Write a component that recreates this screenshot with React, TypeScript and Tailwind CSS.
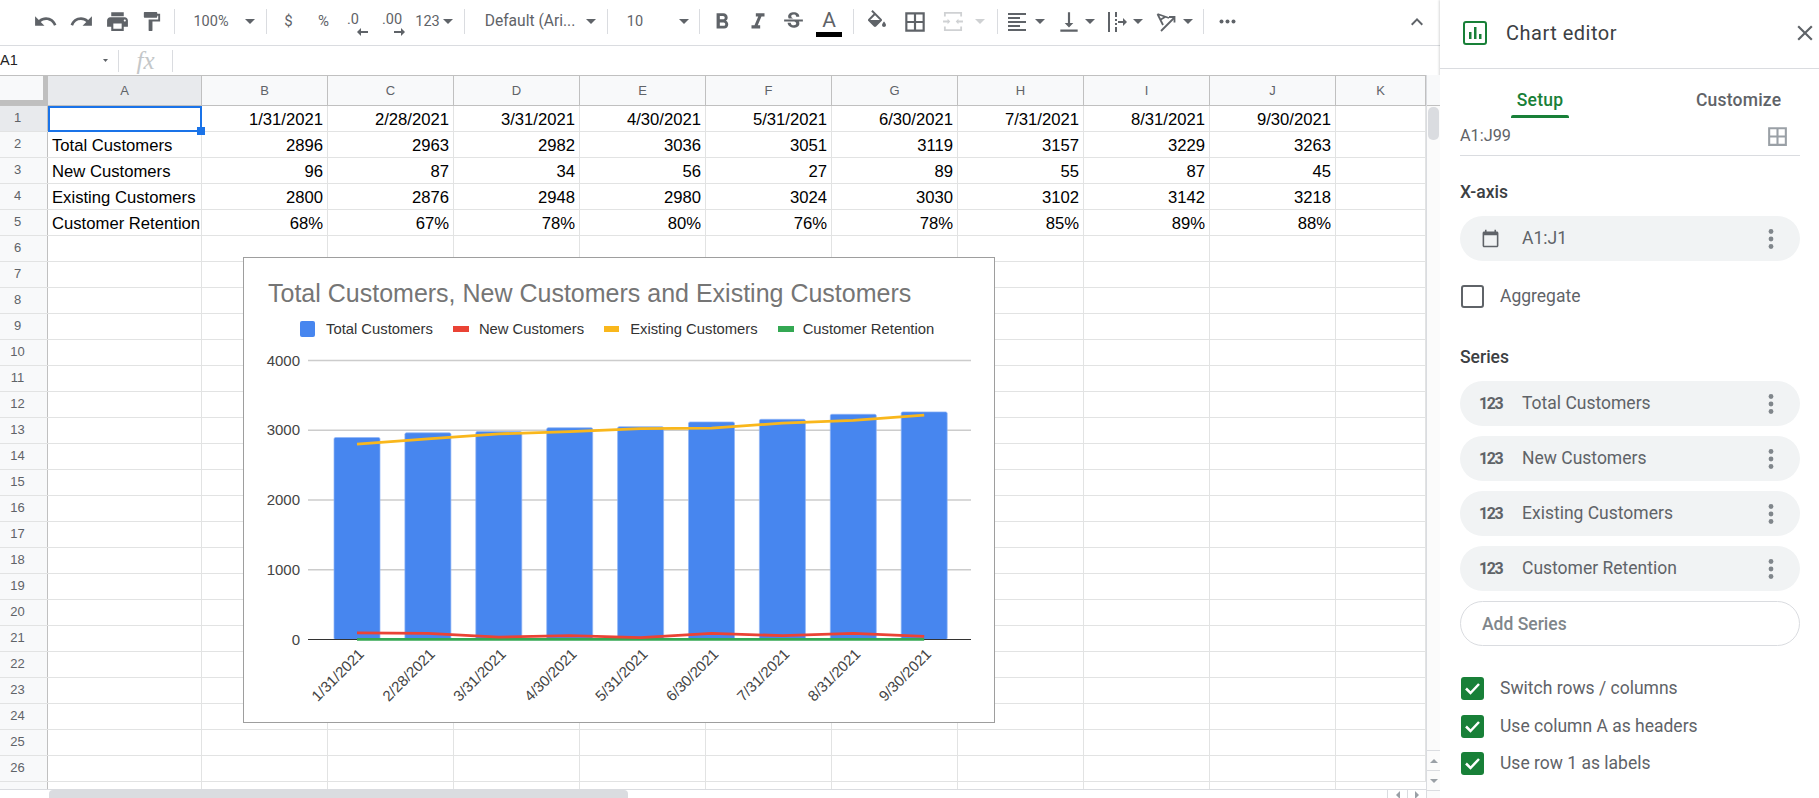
import type { ReactNode } from "react";
import {
  MdUndo,
  MdRedo,
  MdPrint,
  MdFormatPaint,
  MdFormatBold,
  MdFormatItalic,
  MdStrikethroughS,
  MdBorderAll,
  MdFormatAlignLeft,
  MdVerticalAlignBottom,
  MdExpandLess,
  MdClose,
  MdCalendarToday,
} from "react-icons/md";

const columns = ["B", "C", "D", "E", "F", "G", "H", "I", "J"];

const sheet: string[][] = [
  ["", "1/31/2021", "2/28/2021", "3/31/2021", "4/30/2021", "5/31/2021", "6/30/2021", "7/31/2021", "8/31/2021", "9/30/2021"],
  ["Total Customers", "2896", "2963", "2982", "3036", "3051", "3119", "3157", "3229", "3263"],
  ["New Customers", "96", "87", "34", "56", "27", "89", "55", "87", "45"],
  ["Existing Customers", "2800", "2876", "2948", "2980", "3024", "3030", "3102", "3142", "3218"],
  ["Customer Retention", "68%", "67%", "78%", "80%", "76%", "78%", "85%", "89%", "88%"],
];

const rowNumbers = Array.from({ length: 26 }, (_, i) => i + 1);

const totals = [2896, 2963, 2982, 3036, 3051, 3119, 3157, 3229, 3263];
const newCustomers = [96, 87, 34, 56, 27, 89, 55, 87, 45];
const existing = [2800, 2876, 2948, 2980, 3024, 3030, 3102, 3142, 3218];
const retention = [0.68, 0.67, 0.78, 0.8, 0.76, 0.78, 0.85, 0.89, 0.88];
const dates = sheet[0].slice(1);

const baseY = 639.5;
const yOf = (v: number) => baseY - v * 0.06975;
const xOf = (i: number) => 357 + i * 70.9;
const linePoints = (vals: number[]) => vals.map((v, i) => `${xOf(i)},${yOf(v)}`).join(" ");

function Slot({ className, children }: { className: string; children?: ReactNode }) {
  return <div className={`flex shrink-0 items-center justify-center ${className}`}>{children}</div>;
}

function Sep({ className }: { className: string }) {
  return <div className={`h-[25px] w-px shrink-0 bg-[#dadce0] ${className}`} />;
}

function Caret({ className }: { className: string }) {
  return (
    <svg className={`shrink-0 ${className}`} width="10" height="5" viewBox="0 0 10 5">
      <path d="M0 0h10L5 5z" fill="#5f6368" />
    </svg>
  );
}

function Toolbar() {
  return (
    <div className="flex h-[45px] shrink-0 items-center pb-[2px] pl-[27px] text-[14.5px] text-[#5f6368] font-['Roboto',sans-serif]">
      <Slot className="w-[36px]"><MdUndo size={25} /></Slot>
      <Slot className="w-[36px]"><MdRedo size={25} /></Slot>
      <Slot className="w-[36px]"><MdPrint size={25} /></Slot>
      <Slot className="w-[33px]"><MdFormatPaint size={23} /></Slot>
      <Sep className="ml-[6px]" />
      <Slot className="ml-[18px] w-[36px]">100%</Slot>
      <Caret className="ml-[16px]" />
      <Sep className="ml-[11px]" />
      <Slot className="w-[43px] text-[15px]">$</Slot>
      <Slot className="w-[27px] text-[15px]">%</Slot>
      <div className="relative ml-[10px] flex h-[30px] w-[21px] shrink-0 justify-start pt-[2px]">
        <span>.0</span>
        <svg className="absolute right-0 bottom-[1px]" width="11" height="8" viewBox="0 0 11 8">
          <path d="M0 4l4-4v3h7v2H4v3z" fill="#5f6368" />
        </svg>
      </div>
      <div className="relative ml-[14px] flex h-[30px] w-[23px] shrink-0 justify-start pt-[2px]">
        <span>.00</span>
        <svg className="absolute right-0 bottom-[1px]" width="11" height="8" viewBox="0 0 11 8">
          <path d="M11 4L7 0v3H0v2h7v3z" fill="#5f6368" />
        </svg>
      </div>
      <Slot className="ml-[10px] w-[25px]">123</Slot>
      <Caret className="ml-[3px]" />
      <Sep className="ml-[11px]" />
      <Slot className="ml-[21px] w-[88px] whitespace-nowrap text-[15.6px]">Default (Ari...</Slot>
      <Caret className="ml-[12px]" />
      <Sep className="ml-[11px]" />
      <Slot className="ml-[19px] w-[16px]">10</Slot>
      <Caret className="ml-[36px]" />
      <Sep className="ml-[10px]" />
      <Slot className="w-[44px]"><MdFormatBold size={26} /></Slot>
      <Slot className="w-[27px]"><MdFormatItalic size={26} /></Slot>
      <Slot className="w-[44px]"><MdStrikethroughS size={25} /></Slot>
      <div className="relative ml-[1px] h-[31px] w-[26px] shrink-0 pt-px text-center text-[21px] leading-[26px]">
        A
        <div className="absolute inset-x-0 bottom-0 h-[5px] bg-black" />
      </div>
      <Sep className="ml-[11px]" />
      <Slot className="w-[46px]">
        <svg width="24" height="24" viewBox="0 0 24 24" fill="#5f6368">
          <path d="M16.56 8.94L7.62 0 6.21 1.41l2.38 2.38-5.15 5.15c-.59.59-.59 1.54 0 2.12l5.5 5.5c.29.29.68.44 1.06.44s.77-.15 1.06-.44l5.5-5.5c.59-.58.59-1.53 0-2.12zM5.21 10L10 5.21 14.79 10H5.21zM19 11.5s-2 2.17-2 3.5c0 1.1.9 2 2 2s2-.9 2-2c0-1.33-2-3.5-2-3.5z" />
        </svg>
      </Slot>
      <Slot className="w-[30px]"><MdBorderAll size={26} /></Slot>
      <Slot className="w-[45px]">
        <svg width="20" height="19" viewBox="0 0 22 21" fill="#cfd1d3">
          <path d="M1 0h20v5h-2V2H3v3H1zM1 16h2v3h16v-3h2v5H1zM0 9.500h5v-2l3 3-3 3v-2H0zM22 9.500h-5v-2l-3 3 3 3v-2h5z" />
        </svg>
      </Slot>
      <svg className="shrink-0" width="10" height="5" viewBox="0 0 10 5"><path d="M0 0h10L5 5z" fill="#cfd1d3" /></svg>
      <Sep className="ml-[12px]" />
      <Slot className="w-[37px]"><MdFormatAlignLeft size={24} /></Slot>
      <Caret className="" />
      <Slot className="ml-[8px] w-[31px]"><MdVerticalAlignBottom size={26} /></Slot>
      <Caret className="ml-[1px]" />
      <Slot className="ml-[13px] w-[20px]">
        <svg width="20" height="22" viewBox="0 0 20 22" fill="#5f6368">
          <path d="M0 1h2v20H0zM7 1h2v5H7zM7 8h2v2H7zM7 12h2v2H7zM7 16h2v5H7zM10 10h5V7l4 4-4 4v-3h-5z" />
        </svg>
      </Slot>
      <Caret className="ml-[5px]" />
      <Slot className="ml-[12px] w-[22px]">
        <svg width="20" height="20" viewBox="0 0 20 20" fill="none" stroke="#5f6368" strokeWidth="1.800">
          <path d="M1.500 2L13 6M1.500 2L7 13M4 8l5-3" />
          <path d="M5 19L18 6" />
          <path d="M13 5h5.500v5.500" />
        </svg>
      </Slot>
      <Caret className="ml-[6px]" />
      <Sep className="ml-[10px]" />
      <Slot className="ml-[15px] w-[17px]">
        <svg width="17" height="5" viewBox="0 0 17 5" fill="#5f6368">
          <circle cx="2.500" cy="2.500" r="2" />
          <circle cx="8.500" cy="2.500" r="2" />
          <circle cx="14.500" cy="2.500" r="2" />
        </svg>
      </Slot>
      <Slot className="ml-auto mr-[11px] w-[24px]"><MdExpandLess size={32} /></Slot>
    </div>
  );
}

function FormulaBar() {
  return (
    <div className="flex h-[30px] shrink-0 items-center border-t border-[#dadce0] font-['Liberation_Sans',sans-serif]">
      <div className="w-[103px] text-[14.5px] text-[#222]">A1</div>
      <svg width="5" height="3" viewBox="0 0 5 3" className="shrink-0"><path d="M0 0h5L2.500 3z" fill="#5f6368" /></svg>
      <div className="ml-[10px] h-[22px] w-px bg-[#dadce0]" />
      <div className="w-[53px] text-center font-['Liberation_Serif',serif] text-[25px] italic leading-none text-[#c4c7c9]">fx</div>
      <div className="h-[22px] w-px bg-[#dadce0]" />
    </div>
  );
}

function ColumnHeader() {
  return (
    <div className="flex h-[31px] shrink-0 border-y border-[#c0c0c0] bg-[#f8f9fa] font-['Liberation_Sans',sans-serif] text-[13px] text-[#5f6368]">
      <div className="w-[48px] shrink-0 border-r-[5px] border-b-[5px] border-[#bfbfbf]" />
      <div className="flex w-[154px] shrink-0 items-center justify-center border-r border-[#c0c0c0] bg-[#e8eaed]">A</div>
      {columns.map((c) => (
        <div key={c} className="flex w-[126px] shrink-0 items-center justify-center border-r border-[#c0c0c0]">
          {c}
        </div>
      ))}
      <div className="flex w-[90px] shrink-0 items-center justify-center border-r border-[#c0c0c0]">K</div>
    </div>
  );
}

function SheetRow({ n }: { n: number }) {
  const cells = sheet[n - 1];
  return (
    <div className="flex h-[26px] shrink-0 border-b border-[#e2e3e3]">
      <div
        className={
          n === 1
            ? "w-[48px] shrink-0 border-r border-[#c0c0c0] bg-[#e8eaed] pr-[12px] text-center text-[13px] leading-[24px] text-[#5f6368]"
            : "w-[48px] shrink-0 border-r border-[#c0c0c0] bg-[#f8f9fa] pr-[12px] text-center text-[13px] leading-[24px] text-[#5f6368]"
        }
      >
        {n}
      </div>
      <div className="w-[154px] shrink-0 whitespace-nowrap border-r border-[#e2e3e3] pl-[4px] text-[16.67px] leading-[27px] text-black">
        {cells ? cells[0] : ""}
      </div>
      {columns.map((c, i) => (
        <div
          key={c}
          className="w-[126px] shrink-0 border-r border-[#e2e3e3] pr-[4px] text-right text-[16.67px] leading-[27px] text-black"
        >
          {cells ? cells[i + 1] : ""}
        </div>
      ))}
      <div className="w-[90px] shrink-0 border-r border-[#e2e3e3]" />
    </div>
  );
}

function Chart() {
  const legendText = "text-[14.8px] text-[#333]";
  return (
    <div className="absolute left-[243px] top-[182px] flex h-[466px] w-[752px] flex-col border border-[#9e9e9e] bg-white font-['Liberation_Sans',sans-serif]">
      <div className="h-[53px] whitespace-nowrap pl-[24px] pt-[19px] text-[25px] leading-[32px] text-[#757575]">
        Total Customers, New Customers and Existing Customers
      </div>
      <div className="flex h-[36px] items-center pl-[56px]">
        <div className="h-[16px] w-[15px] rounded-[2px] bg-[#4786ef]" />
        <span className={`ml-[11px] ${legendText}`}>Total Customers</span>
        <div className="ml-[20px] h-[6px] w-[16px] bg-[#ea4335]" />
        <span className={`ml-[10px] ${legendText}`}>New Customers</span>
        <div className="ml-[20px] h-[6px] w-[15px] bg-[#f9b71c]" />
        <span className={`ml-[11px] ${legendText}`}>Existing Customers</span>
        <div className="ml-[20px] h-[6px] w-[16px] bg-[#34a853]" />
        <span className={`ml-[9px] ${legendText}`}>Customer Retention</span>
      </div>
      <svg className="block" width="750" height="375" viewBox="244 347 750 375" fontFamily="'Liberation Sans', sans-serif">
        {[4000, 3000, 2000, 1000].map((v) => (
          <line key={v} x1="308" x2="971" y1={yOf(v)} y2={yOf(v)} stroke="#cccccc" strokeWidth="1.500" />
        ))}
        {[4000, 3000, 2000, 1000, 0].map((v) => (
          <text key={v} x="300" y={yOf(v) + 5} textAnchor="end" fontSize="15" fill="#444">
            {v}
          </text>
        ))}
        {totals.map((v, i) => (
          <rect
            key={i}
            x={xOf(i) - 23}
            y={yOf(v)}
            width="46"
            height={baseY - yOf(v)}
            rx="1.500"
            fill="#4786ef"
            stroke="#8fb4f7"
            strokeWidth="0.700"
          />
        ))}
        <line x1="308" x2="971" y1={baseY} y2={baseY} stroke="#333" strokeWidth="1.200" />
        <polyline points={linePoints(retention)} fill="none" stroke="#34a853" strokeWidth="2.800" />
        <polyline points={linePoints(newCustomers)} fill="none" stroke="#ea4335" strokeWidth="2.800" strokeLinejoin="round" />
        <polyline points={linePoints(existing)} fill="none" stroke="#f9b71c" strokeWidth="2.800" strokeLinejoin="round" />
        {dates.map((d, i) => (
          <text
            key={d}
            x={xOf(i) + 8}
            y="655"
            textAnchor="end"
            fontSize="15"
            fill="#444"
            transform={`rotate(-45 ${xOf(i) + 8} 655)`}
          >
            {d}
          </text>
        ))}
      </svg>
    </div>
  );
}

function ScrollArrow({ up }: { up: boolean }) {
  return (
    <div className="flex h-[20px] items-center justify-center border-t border-[#dadce0]">
      <svg width="8" height="4" viewBox="0 0 8 4">
        <path d={up ? "M0 4h8L4 0z" : "M0 0h8L4 4z"} fill="#9aa0a6" />
      </svg>
    </div>
  );
}

function Sheet() {
  return (
    <div className="flex min-w-0 flex-1 flex-col overflow-hidden">
      <Toolbar />
      <FormulaBar />
      <div className="relative flex flex-1 overflow-hidden font-['Liberation_Sans',sans-serif]">
        <div className="w-[1426px] shrink-0">
          <ColumnHeader />
          {rowNumbers.map((n) => (
            <SheetRow key={n} n={n} />
          ))}
          <div className="flex h-[8px] border-b border-[#dadce0]">
            <div className="w-[48px] shrink-0 border-r border-[#c0c0c0] bg-[#f8f9fa]" />
            <div className="w-[154px] shrink-0 border-r border-[#e2e3e3]" />
            {columns.map((c) => (
              <div key={c} className="w-[126px] shrink-0 border-r border-[#e2e3e3]" />
            ))}
          </div>
          <div className="flex h-[9px] pl-[49px]">
            <div className="h-full w-[579px] rounded-t-[4px] bg-[#dadce0]" />
            <div className="ml-auto flex">
              <div className="flex w-[20px] items-center justify-center border-l border-[#dadce0]">
                <svg width="4" height="8" viewBox="0 0 4 8"><path d="M4 0v8L0 4z" fill="#9aa0a6" /></svg>
              </div>
              <div className="flex w-[19px] items-center justify-center border-l border-[#dadce0]">
                <svg width="4" height="8" viewBox="0 0 4 8"><path d="M0 0v8l4-4z" fill="#9aa0a6" /></svg>
              </div>
            </div>
          </div>
        </div>
        <div className="flex w-[14px] shrink-0 flex-col border-l border-[#dadce0] bg-[#fbfbfb]">
          <div className="h-[31px] border-b border-[#c0c0c0] bg-[#f8f9fa]" />
          <div className="mx-auto mt-px h-[33px] w-[11px] rounded-[5px] bg-[#dadce0]" />
          <div className="mt-auto">
            <ScrollArrow up />
            <ScrollArrow up={false} />
            <div className="h-[8px] border-t border-[#dadce0]" />
          </div>
        </div>
        {/* A1 selection */}
        <div className="absolute left-[48px] top-[31px] h-[26px] w-[154px] border-2 border-[#1a73e8]" />
        <div className="absolute left-[197px] top-[52px] h-[8px] w-[8px] bg-[#1a73e8]" />
        <Chart />
      </div>
    </div>
  );
}

function Dots() {
  return (
    <svg className="ml-auto mr-[24px] shrink-0" width="10" height="26" viewBox="0 0 10 26" fill="#80868b">
      <circle cx="5" cy="5.500" r="2.400" />
      <circle cx="5" cy="13" r="2.400" />
      <circle cx="5" cy="20.500" r="2.400" />
    </svg>
  );
}

function SeriesPill({ label, className }: { label: string; className: string }) {
  return (
    <div className={`flex h-[45px] items-center rounded-full bg-[#f1f3f4] ${className}`}>
      <span className="w-[62px] pl-[19px] text-[16px] font-bold tracking-[-1.4px] text-[#5f6368]">123</span>
      <span>{label}</span>
      <Dots />
    </div>
  );
}

function CheckRow({ label, checked, className }: { label: string; checked: boolean; className: string }) {
  return (
    <div className={`flex h-[23px] items-center gap-[16px] pl-px ${className}`}>
      {checked ? (
        <div className="flex h-[23px] w-[23px] items-center justify-center rounded-[3px] bg-[#188038]">
          <svg width="23" height="23" viewBox="0 0 23 23" fill="none" stroke="#fff" strokeWidth="2.500">
            <path d="M5 11.500l4.500 4.500L18 7" />
          </svg>
        </div>
      ) : (
        <div className="h-[23px] w-[23px] rounded-[3px] border-2 border-[#5f6368]" />
      )}
      <span>{label}</span>
    </div>
  );
}

function ChartEditor() {
  return (
    <aside className="flex w-[379px] shrink-0 flex-col bg-white font-['Roboto',sans-serif] text-[17.5px] text-[#5f6368] shadow-[-1px_0_2px_rgba(60,64,67,0.2)]">
      <div className="flex h-[69px] shrink-0 items-center border-b border-[#dadce0] pb-[3px] pl-[23px]">
        <svg width="24" height="24" viewBox="0 0 24 24" fill="none">
          <rect x="1" y="1" width="22" height="22" rx="2" stroke="#188038" strokeWidth="2" />
          <path d="M6 11h2.500v7H6zM11 6h2.500v12H11zM16 13h2.500v5H16z" fill="#188038" />
        </svg>
        <span className="ml-[19px] text-[20px] tracking-[0.5px] text-[#3c4043]">Chart editor</span>
        <MdClose size={26} className="ml-auto mr-[1px] text-[#5f6368]" />
      </div>
      <div className="flex h-[49px] shrink-0 text-[17.5px] font-medium tracking-[0.2px]">
        <div className="relative flex w-[200px] justify-center pt-[18px] text-[#188038]">
          Setup
          <div className="absolute bottom-0 left-[71px] h-[3px] w-[58px] rounded-t-[2px] bg-[#188038]" />
        </div>
        <div className="w-[179px] pl-[56px] pt-[18px]">Customize</div>
      </div>
      <div className="flex grow flex-col pl-[20px] pr-[19px]">
        <div className="flex h-[38px] items-center justify-between border-b border-[#dadce0] text-[16.25px]">
          <span>A1:J99</span>
          <MdBorderAll size={25} className="mr-[10px] text-[#9aa0a6]" />
        </div>
        <div className="mt-[25px] h-[23px] font-medium leading-[22px] text-[#3c4043]">X-axis</div>
        <div className="mt-[12px] flex h-[45px] items-center rounded-full bg-[#f1f3f4]">
          <span className="w-[62px] pl-[21px]"><MdCalendarToday size={19} /></span>
          <span>A1:J1</span>
          <Dots />
        </div>
        <CheckRow label="Aggregate" checked={false} className="mt-[24px]" />
        <div className="mt-[38px] h-[23px] font-medium leading-[22px] text-[#3c4043]">Series</div>
        <SeriesPill label="Total Customers" className="mt-[12px]" />
        <SeriesPill label="New Customers" className="mt-[10px]" />
        <SeriesPill label="Existing Customers" className="mt-[10px]" />
        <SeriesPill label="Customer Retention" className="mt-[10px]" />
        <div className="mt-[10px] flex h-[45px] items-center rounded-full border border-[#dadce0] pl-[21px] pt-[2px] font-medium text-[#80868b]">
          Add Series
        </div>
        <CheckRow label="Switch rows / columns" checked className="mt-[31px]" />
        <CheckRow label="Use column A as headers" checked className="mt-[15px]" />
        <CheckRow label="Use row 1 as labels" checked className="mt-[14px]" />
      </div>
    </aside>
  );
}

export default function App() {
  return (
    <div className="flex h-[798px] w-[1819px] overflow-hidden bg-white">
      <Sheet />
      <ChartEditor />
    </div>
  );
}
